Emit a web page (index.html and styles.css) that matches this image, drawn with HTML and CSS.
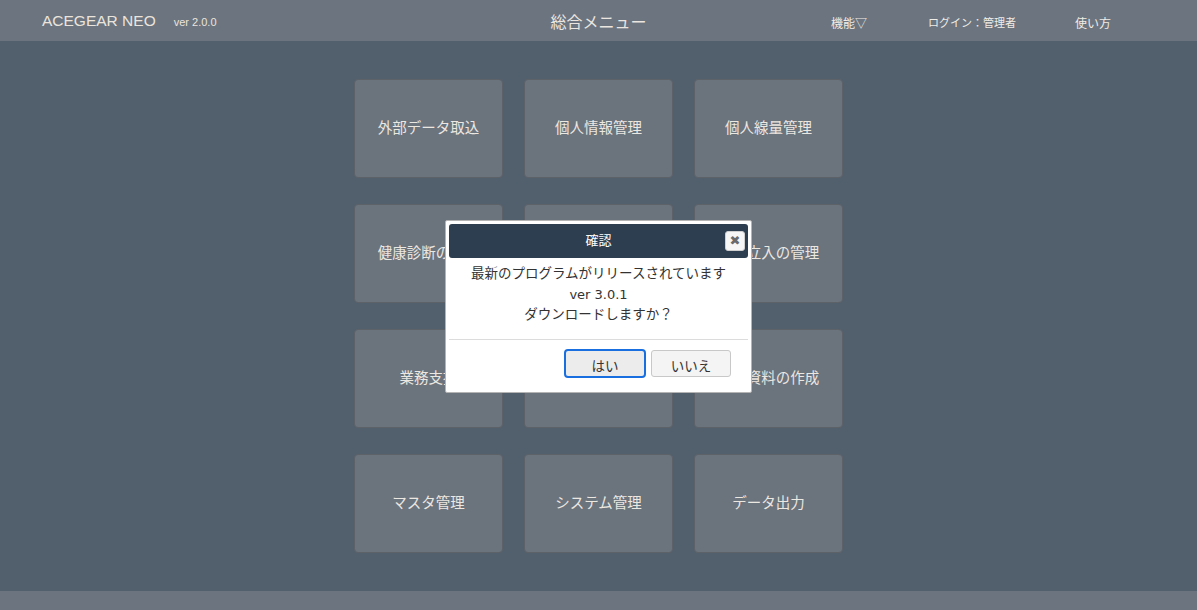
FILE: index.html
```html
<!DOCTYPE html>
<html lang="ja">
<head>
  <meta charset="UTF-8" />
  <meta name="viewport" content="width=device-width, initial-scale=1.0" />
  <title>総合メニュー</title>
  <link rel="stylesheet" href="styles.css">
</head>
<body>
  <header class="topbar">
    <div class="brand">
      <span class="brand-name">ACEGEAR NEO</span>
      <span class="brand-ver">ver 2.0.0</span>
    </div>
    <div class="page-title">総合メニュー</div>
    <nav class="topnav">
      <span class="nav-func">機能▽</span>
      <span class="nav-login">ログイン：管理者</span>
      <span class="nav-help">使い方</span>
    </nav>
  </header>

  <main class="menu">
    <div class="menu-grid">
      <div class="tile">外部データ取込</div>
      <div class="tile">個人情報管理</div>
      <div class="tile">個人線量管理</div>
      <div class="tile">健康診断の管理</div>
      <div class="tile">教育訓練の管理</div>
      <div class="tile">区域立入の管理</div>
      <div class="tile">業務支援</div>
      <div class="tile">帳票出力</div>
      <div class="tile">報告資料の作成</div>
      <div class="tile">マスタ管理</div>
      <div class="tile">システム管理</div>
      <div class="tile">データ出力</div>
    </div>
  </main>

  <footer class="bottombar"></footer>

  <div class="dialog">
    <div class="dialog-head">
      <span class="dialog-title">確認</span>
      <button class="dialog-close">✖</button>
    </div>
    <div class="dialog-body">
      <p>最新のプログラムがリリースされています</p>
      <p class="dialog-ver">ver 3.0.1</p>
      <p>ダウンロードしますか？</p>
    </div>
    <div class="dialog-foot">
      <button class="btn btn-yes">はい</button>
      <button class="btn btn-no">いいえ</button>
    </div>
  </div>
</body>
</html>
```

FILE: styles.css
```css
html, body {
  height: 100%;
}
body {
  margin: 0;
  font-family: "Noto Sans CJK JP", "Noto Sans", sans-serif;
  background: #525f6c;
  display: flex;
  flex-direction: column;
  color: #e9e6e1;
}
.topbar {
  height: 41px;
  background: #6b747f;
  display: grid;
  grid-template-columns: 1fr auto 1fr;
  align-items: center;
}
.brand {
  padding-left: 42px;
  display: flex;
  align-items: baseline;
}
.brand-name {
  font-family: "Liberation Sans", sans-serif;
  font-size: 15.5px;
  color: #ebe4dc;
}
.brand-ver {
  font-family: "Liberation Sans", sans-serif;
  font-size: 11px;
  margin-left: 18px;
  color: #ebe4dc;
}
.page-title {
  font-size: 16px;
  color: #ebe6e0;
}
.topnav {
  display: flex;
  justify-content: flex-end;
  padding-right: 86px;
  padding-top: 3px;
  font-size: 12px;
  color: #f0ece6;
}
.nav-func {
  margin-right: 61px;
}
.nav-login {
  margin-right: 59px;
  font-size: 11px;
}
.menu {
  flex: 1;
  display: flex;
  justify-content: center;
  padding-top: 38px;
}
.menu-grid {
  display: grid;
  grid-template-columns: repeat(3, 149px);
  grid-auto-rows: 99px;
  column-gap: 21px;
  row-gap: 26px;
  align-content: start;
}
.tile {
  background: #6b737d;
  border: 1px solid #5d6168;
  border-radius: 4px;
  display: flex;
  align-items: center;
  justify-content: center;
  padding-bottom: 4px;
  font-size: 14.5px;
  color: #ebe7e1;
}
.bottombar {
  height: 19px;
  background: #6b747f;
}
.dialog {
  position: absolute;
  left: 445px;
  top: 220px;
  width: 299px;
  padding: 3px;
  background: #fff;
  border: 1px solid #b4b4b4;
  border-radius: 2px;
  color: #333;
}
.dialog-head {
  height: 34px;
  background: #2c3e50;
  border-radius: 3px;
  position: relative;
  display: flex;
  align-items: center;
  justify-content: center;
}
.dialog-title {
  color: #fff;
  font-size: 13px;
  padding-bottom: 3px;
}
.dialog-close {
  position: absolute;
  right: 3px;
  top: 7px;
  width: 20px;
  height: 20px;
  padding: 0;
  border: 1px solid #cfcfcf;
  border-radius: 3px;
  background: #f6f6f6;
  color: #6a6a6a;
  font-size: 13px;
  font-weight: bold;
  line-height: 18px;
  font-family: "DejaVu Sans", sans-serif;
}
.dialog-body {
  padding: 6px 0 13px;
  text-align: center;
  font-family: "Liberation Sans", "Noto Sans CJK JP", sans-serif;
  font-size: 13.5px;
}
.dialog-body p {
  margin: 0;
  line-height: 20.5px;
}
.dialog-body .dialog-ver {
  font-family: "DejaVu Sans", sans-serif;
  font-size: 13px;
}
.dialog-foot {
  border-top: 1px solid #dcdcdc;
  display: flex;
  justify-content: flex-end;
  gap: 5px;
  padding: 9px 17px 11px 0;
  align-items: center;
}
.btn {
  font-family: "Noto Sans CJK JP", sans-serif;
  font-size: 13.5px;
  color: #333;
  border-radius: 3px;
  padding: 4px 0 0;
}
.btn-yes {
  width: 82px;
  height: 29px;
  background: #ececec;
  border: 2px solid #1a6fe0;
  border-radius: 4px;
}
.btn-no {
  width: 80px;
  height: 27px;
  background: #f4f4f4;
  border: 1px solid #c8c8c8;
}
```
